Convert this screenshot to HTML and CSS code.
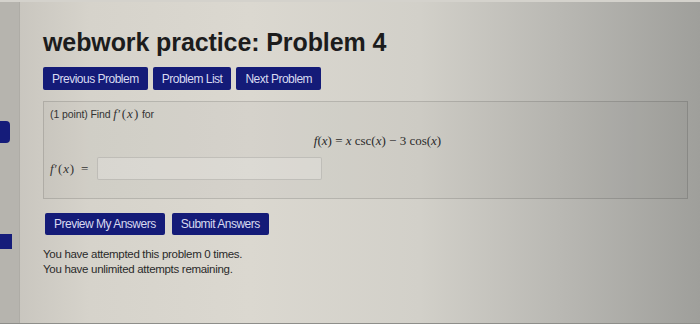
FILE: index.html
```html
<!DOCTYPE html>
<html>
<head>
<meta charset="utf-8">
<link rel="stylesheet" href="styles.css">
</head>
<body>
<div class="page">
  <div class="sidebar">
    <div class="tab tab-one"></div>
    <div class="tab tab-two"></div>
  </div>
  <div class="main">
    <h1 class="title">webwork practice: Problem 4</h1>
    <div class="nav">
      <button class="btn">Previous Problem</button>
      <button class="btn">Problem List</button>
      <button class="btn">Next Problem</button>
    </div>
    <div class="problem">
      <div class="prompt">(1 point) Find <span class="math"><i>f</i>′(<i>x</i>)</span> for</div>
      <div class="equation"><i>f</i>(<i>x</i>) = <i>x</i> csc(<i>x</i>) − 3 cos(<i>x</i>)</div>
      <div class="answer-row">
        <span class="math label"><i>f</i>′(<i>x</i>) =</span>
        <input class="answer" type="text">
      </div>
    </div>
    <div class="actions">
      <button class="btn btn-lg">Preview My Answers</button>
      <button class="btn btn-lg">Submit Answers</button>
    </div>
    <div class="status">
      <div>You have attempted this problem 0 times.</div>
      <div>You have unlimited attempts remaining.</div>
    </div>
  </div>
</div>
</body>
</html>
```
FILE: styles.css
```css
html, body {
  margin: 0;
  padding: 0;
}
body {
  width: 700px;
  height: 324px;
  overflow: hidden;
  font-family: "Liberation Sans", Arial, sans-serif;
  background: linear-gradient(90deg, #c6c3bc 0px, #d6d3cb 90px, #dbd8d0 250px, #d2d0c9 420px, #b9b8b3 560px, #9f9f9b 700px);
  color: #222;
}
.page {
  display: flex;
  border-top: 2px solid #d4d2cc;
  border-bottom: 1px solid #8e8e8a;
  box-sizing: border-box;
  height: 324px;
}
.sidebar {
  width: 19px;
  flex: none;
  background: #b6b4ae;
  border-right: 1px solid #aeaca6;
  display: flex;
  flex-direction: column;
}
.tab {
  background: #151c7a;
}
.tab-one {
  width: 10px;
  height: 22px;
  margin-top: 119px;
  border-radius: 0 4px 4px 0;
}
.tab-two {
  width: 12px;
  height: 15px;
  margin-top: 91px;
}
.main {
  flex: 1;
  padding: 0 12px 0 23px;
}
.title {
  margin: 25px 0 0;
  font-size: 25px;
  line-height: 30px;
  font-weight: bold;
  color: #1c1c1c;
  letter-spacing: -0.1px;
}
.nav {
  display: flex;
  gap: 5px;
  margin-top: 10px;
}
.btn {
  font-family: "Liberation Sans", Arial, sans-serif;
  font-size: 12px;
  letter-spacing: -0.5px;
  height: 23px;
  padding: 0 9px;
  border: none;
  border-radius: 2px;
  background: #141b78;
  color: #d8daf0;
}
.problem {
  margin-top: 11px;
  height: 98px;
  box-sizing: border-box;
  border: 1px solid rgba(0, 0, 0, 0.13);
  background: rgba(0, 0, 0, 0.025);
  padding: 4px 6px;
  font-size: 10.5px;
}
.prompt {
  color: #333;
  letter-spacing: -0.1px;
}
.math {
  font-family: "Liberation Serif", "Times New Roman", serif;
  font-size: 13px;
  letter-spacing: 1px;
}
.equation {
  font-family: "Liberation Serif", "Times New Roman", serif;
  font-size: 13px;
  text-align: center;
  margin-top: 11px;
  padding-left: 24px;
  color: #2a2a2a;
}
.answer-row {
  display: flex;
  align-items: center;
  gap: 8px;
  margin-top: 8px;
}
.label {
  color: #333;
  font-size: 13px;
  letter-spacing: 0.8px;
  word-spacing: 2px;
}
.answer {
  width: 225px;
  height: 23px;
  box-sizing: border-box;
  border: 1px solid rgba(0, 0, 0, 0.12);
  border-radius: 2px;
  background: rgba(255, 255, 255, 0.18);
}
.actions {
  display: flex;
  gap: 7px;
  margin-top: 14px;
  padding-left: 2px;
}
.btn-lg {
  padding: 0 9px;
  height: 22px;
}
.status {
  margin-top: 12px;
  font-size: 11.5px;
  line-height: 15px;
  color: #2a2a2a;
  letter-spacing: -0.3px;
}
```
